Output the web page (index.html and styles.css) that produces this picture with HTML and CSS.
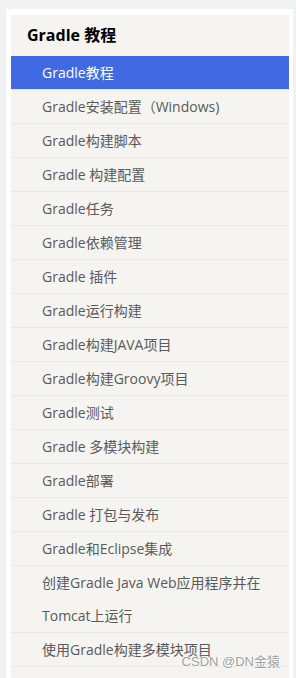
FILE: index.html
```html
<!DOCTYPE html>
<html lang="zh-CN">
<head>
<meta charset="utf-8">
<title>Gradle 教程</title>
<link rel="stylesheet" href="styles.css">
</head>
<body>
<div class="page">
  <div class="card">
    <div class="menu">
      <h2 class="menu-title">Gradle 教程</h2>
      <a class="item active" href="#">Gradle教程</a>
      <a class="item" href="#">Gradle安装配置（Windows)</a>
      <a class="item" href="#">Gradle构建脚本</a>
      <a class="item" href="#">Gradle 构建配置</a>
      <a class="item" href="#">Gradle任务</a>
      <a class="item" href="#">Gradle依赖管理</a>
      <a class="item" href="#">Gradle 插件</a>
      <a class="item" href="#">Gradle运行构建</a>
      <a class="item" href="#">Gradle构建JAVA项目</a>
      <a class="item" href="#">Gradle构建Groovy项目</a>
      <a class="item" href="#">Gradle测试</a>
      <a class="item" href="#">Gradle 多模块构建</a>
      <a class="item" href="#">Gradle部署</a>
      <a class="item" href="#">Gradle 打包与发布</a>
      <a class="item" href="#">Gradle和Eclipse集成</a>
      <a class="item" href="#">创建Gradle Java Web应用程序并在Tomcat上运行</a>
      <a class="item" href="#">使用Gradle构建多模块项目</a>
    </div>
  </div>
</div>
<div class="watermark">CSDN @DN金猿</div>
</body>
</html>
```

FILE: styles.css
```css
html, body {
  margin: 0;
  padding: 0;
}
body {
  background: #f1f2f4;
  font-family: "Open Sans", "Noto Sans CJK SC", sans-serif;
  height: 678px;
  overflow: hidden;
}
.page {
  box-sizing: border-box;
  height: 678px;
  padding: 9px 3px 0 6px;
  display: flex;
  flex-direction: column;
}
.card {
  flex: 1;
  min-height: 0;
  background: #ffffff;
  padding: 6px 4px 0 5px;
  display: flex;
  flex-direction: column;
  overflow: hidden;
}
.menu {
  flex: 1;
  min-height: 0;
  background: #f5f4f0;
  display: flex;
  flex-direction: column;
  overflow: hidden;
}
.menu-title {
  flex: none;
  margin: 0;
  height: 41px;
  line-height: 41px;
  padding-left: 16px;
  font-size: 16px;
  font-weight: bold;
  color: #000;
}
.item {
  flex: none;
  display: block;
  padding: 0 10px 0 31px;
  line-height: 33px;
  font-size: 14px;
  color: #5a5a5a;
  text-decoration: none;
  border-bottom: 1px solid #ebe9e4;
}
.item.active {
  background: #4169e1;
  color: #ffffff;
}
.watermark {
  position: absolute;
  right: 16px;
  top: 651px;
  font-family: "Liberation Sans", "Noto Sans CJK SC", sans-serif;
  font-size: 13px;
  color: #a0a0a0;
  text-shadow: 0 0 2px #fff, 0 0 2px #fff;
}
```
